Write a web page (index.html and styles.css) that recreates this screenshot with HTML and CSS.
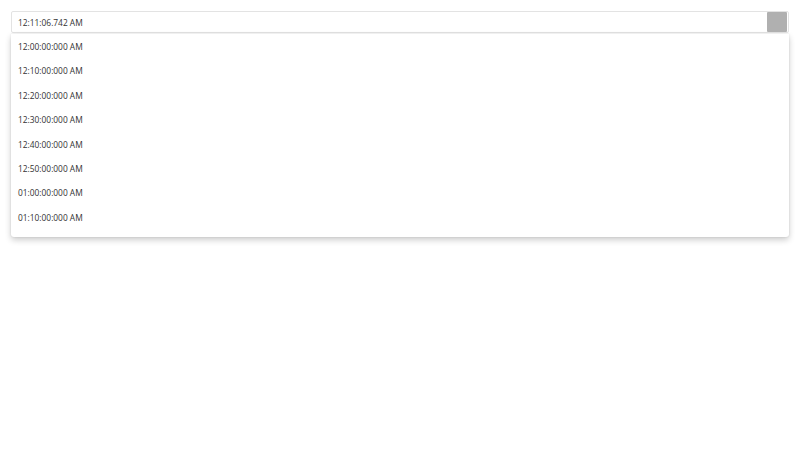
FILE: index.html
```html
<!DOCTYPE html>
<html>
<head>
<meta charset="utf-8">
<link rel="stylesheet" href="styles.css">
</head>
<body>
<div class="picker">
  <div class="field">
    <span class="value">12:11:06.742 AM</span>
    <span class="btn"></span>
  </div>
  <ul class="popup">
    <li>12:00:00:000 AM</li>
    <li>12:10:00:000 AM</li>
    <li>12:20:00:000 AM</li>
    <li>12:30:00:000 AM</li>
    <li>12:40:00:000 AM</li>
    <li>12:50:00:000 AM</li>
    <li>01:00:00:000 AM</li>
    <li>01:10:00:000 AM</li>
  </ul>
</div>
</body>
</html>
```
FILE: styles.css
```css
html, body {
  margin: 0;
  padding: 0;
  background: #fff;
}
body {
  padding: 11px;
  font-family: "Open Sans", "Noto Sans", sans-serif;
  font-size: 8.4px;
  color: #333;
}
.picker {
  width: 778px;
}
.field {
  height: 22px;
  box-sizing: border-box;
  border: 1px solid #e3e3e3;
  border-radius: 2px;
  display: flex;
  align-items: center;
  padding: 0 1px 0 6px;
}
.value {
  flex: 1;
}
.btn {
  width: 20px;
  height: 20px;
  background: #b0b0b0;
  border-radius: 1px;
}
.popup {
  list-style: none;
  margin: 1px 0 0;
  padding: 1px 0 7px;
  background: #fff;
  border-radius: 0 0 3px 3px;
  box-shadow: 0 3px 6px rgba(0,0,0,0.2), 0 0 2px rgba(0,0,0,0.12);
}
.popup li {
  height: 24.4px;
  line-height: 24.4px;
  padding-left: 7px;
}
```
